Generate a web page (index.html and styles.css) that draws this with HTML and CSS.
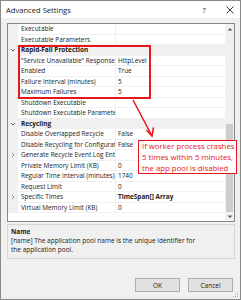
FILE: index.html
```html
<!DOCTYPE html>
<html>
<head>
<meta charset="utf-8">
<link rel="stylesheet" href="styles.css">
</head>
<body>
<div class="window">
  <div class="titlebar">
    <span class="title">Advanced Settings</span>
    <span class="help">?</span>
    <span class="close"><svg width="8" height="8" viewBox="0 0 8 8"><path d="M0.5 0.5 L7.5 7.5 M7.5 0.5 L0.5 7.5" stroke="#222" stroke-width="0.9" fill="none"/></svg></span>
  </div>
  <div class="body">
    <div class="grid">
      <div class="rows">
        <div class="row"><span class="gut"></span><span class="name">Executable</span><span class="val"></span></div>
        <div class="row"><span class="gut"></span><span class="name">Executable Parameters</span><span class="val"></span></div>
        <div class="row cat"><span class="gut"><svg class="chev" width="6" height="6" viewBox="0 0 6 6"><path d="M1 2 L3 4 L5 2" stroke="#555" stroke-width="0.9" fill="none"/></svg></span><span class="name">Rapid-Fail Protection</span></div>
        <div class="row"><span class="gut"></span><span class="name">"Service Unavailable" Response Type</span><span class="val">HttpLevel</span></div>
        <div class="row"><span class="gut"></span><span class="name">Enabled</span><span class="val">True</span></div>
        <div class="row"><span class="gut"></span><span class="name">Failure Interval (minutes)</span><span class="val">5</span></div>
        <div class="row"><span class="gut"></span><span class="name">Maximum Failures</span><span class="val">5</span></div>
        <div class="row"><span class="gut"></span><span class="name">Shutdown Executable</span><span class="val"></span></div>
        <div class="row"><span class="gut"></span><span class="name">Shutdown Executable Parameters</span><span class="val"></span></div>
        <div class="row cat"><span class="gut"><svg class="chev" width="6" height="6" viewBox="0 0 6 6"><path d="M1 2 L3 4 L5 2" stroke="#555" stroke-width="0.9" fill="none"/></svg></span><span class="name">Recycling</span></div>
        <div class="row"><span class="gut"></span><span class="name">Disable Overlapped Recycle</span><span class="val">False</span></div>
        <div class="row"><span class="gut"></span><span class="name">Disable Recycling for Configuration Changes</span><span class="val">False</span></div>
        <div class="row"><span class="gut"><svg class="chev" width="6" height="6" viewBox="0 0 6 6"><path d="M2 1 L4 3 L2 5" stroke="#888" stroke-width="0.9" fill="none"/></svg></span><span class="name">Generate Recycle Event Log Entry</span><span class="val"></span></div>
        <div class="row"><span class="gut"></span><span class="name">Private Memory Limit (KB)</span><span class="val">0</span></div>
        <div class="row"><span class="gut"></span><span class="name">Regular Time Interval (minutes)</span><span class="val">1740</span></div>
        <div class="row"><span class="gut"></span><span class="name">Request Limit</span><span class="val">0</span></div>
        <div class="row"><span class="gut"><svg class="chev" width="6" height="6" viewBox="0 0 6 6"><path d="M2 1 L4 3 L2 5" stroke="#888" stroke-width="0.9" fill="none"/></svg></span><span class="name">Specific Times</span><span class="val bold">TimeSpan[] Array</span></div>
        <div class="row"><span class="gut"></span><span class="name">Virtual Memory Limit (KB)</span><span class="val">0</span></div>
      </div>
      <div class="scrollbar">
        <span class="sb-btn"><svg width="6" height="4" viewBox="0 0 6 4"><path d="M0.5 3.5 L3 1 L5.5 3.5 Z" fill="#606060"/></svg></span>
        <span class="track"><span class="thumb"></span></span>
        <span class="sb-btn"><svg width="6" height="4" viewBox="0 0 6 4"><path d="M0.5 0.5 L3 3 L5.5 0.5 Z" fill="#606060"/></svg></span>
      </div>
    </div>
    <div class="desc">
      <div class="desc-title">Name</div>
      <div class="desc-text">[name] The application pool name is the unique identifier for the application pool.</div>
    </div>
    <div class="buttons">
      <button class="btn">OK</button>
      <button class="btn">Cancel</button>
    </div>
  </div>
  <div class="highlight"></div>
  <svg class="arrow" width="30" height="42" viewBox="0 0 30 42"><path d="M2 1 L20 35" stroke="#e8151d" stroke-width="1.5" fill="none"/><path d="M15.5 31 L21 37 L22.5 28.5" stroke="#e8151d" stroke-width="1.5" fill="none"/></svg>
  <div class="callout">If worker process crashes 5 times within 5 minutes, the app pool is disabled</div>
  <svg class="grip" width="6" height="6" viewBox="0 0 6 6"><rect x="4" y="0" width="1" height="1" fill="#aaa"/><rect x="2" y="2" width="1" height="1" fill="#aaa"/><rect x="4" y="2" width="1" height="1" fill="#aaa"/><rect x="0" y="4" width="1" height="1" fill="#aaa"/><rect x="2" y="4" width="1" height="1" fill="#aaa"/><rect x="4" y="4" width="1" height="1" fill="#aaa"/></svg>
</div>
</body>
</html>
```

FILE: styles.css
```css
* { box-sizing: border-box; }
html, body { margin: 0; padding: 0; }
body {
  width: 241px;
  height: 300px;
  overflow: hidden;
  font-family: "Open Sans", "Noto Sans", sans-serif;
  color: #1a1a1a;
}
.window {
  position: relative;
  width: 241px;
  height: 300px;
  border: 1px solid #8a8a8a;
  background: #f0f0f0;
}
.titlebar {
  height: 17px;
  background: #fff;
  display: flex;
  align-items: center;
  padding-left: 5px;
  font-size: 7.6px;
}
.title { flex: 1; }
.help {
  width: 10px;
  text-align: center;
  font-size: 7.5px;
  margin-right: 16px;
}
.close {
  width: 10px;
  display: flex;
  justify-content: center;
  margin-right: 5px;
}
.body {
  padding: 5px 5px 0 6px;
}
.grid {
  height: 199px;
  border: 1px solid #828790;
  background: #fff;
  display: flex;
}
.rows {
  flex: 1;
  overflow: hidden;
}
.row {
  display: grid;
  grid-template-columns: 10px 98px 1fr;
  height: 10.5px;
  font-size: 6.45px;
  line-height: 10px;
}
.gut {
  background: #f0f0f0;
  display: flex;
  align-items: center;
  justify-content: center;
}
.name {
  padding-left: 3px;
  white-space: nowrap;
  overflow: hidden;
  border-right: 1px solid #f0f0f0;
  border-bottom: 1px solid #f0f0f0;
}
.val {
  padding-left: 2px;
  white-space: nowrap;
  overflow: hidden;
  border-bottom: 1px solid #f0f0f0;
}
.cat {
  background: #f0f0f0;
}
.cat .name {
  font-weight: 700;
  border: none;
  grid-column: 2 / 4;
}
.bold { font-weight: 700; }
.scrollbar {
  width: 9px;
  background: #f0f0f0;
  display: flex;
  flex-direction: column;
}
.sb-btn {
  height: 9px;
  display: flex;
  align-items: center;
  justify-content: center;
}
.track {
  flex: 1;
  display: flex;
  flex-direction: column;
  justify-content: flex-end;
  padding: 0 1px;
}
.thumb {
  height: 88px;
  background: #cdcdcd;
}
.desc {
  margin-top: 2px;
  height: 35px;
  border: 1px solid #d5d5d5;
  padding: 2px 3px;
  font-size: 6.5px;
  line-height: 9px;
}
.desc-title { font-weight: 700; }
.desc-text { padding-right: 28px; }
.buttons {
  display: flex;
  justify-content: flex-end;
  gap: 8px;
  margin-top: 19px;
  padding-right: 2px;
}
.btn {
  width: 45px;
  height: 14px;
  padding: 0;
  border: 1px solid #adadad;
  background: #e1e1e1;
  font-family: inherit;
  font-size: 6.5px;
  color: #1a1a1a;
}
.highlight {
  position: absolute;
  left: 17px;
  top: 44px;
  width: 133px;
  height: 54px;
  border: 2px solid #e8151d;
}
.arrow {
  position: absolute;
  left: 130px;
  top: 98px;
}
.callout {
  position: absolute;
  left: 137px;
  top: 139px;
  width: 99px;
  height: 34px;
  border: 1px solid #e8151d;
  background: #fff;
  color: #e8151d;
  font-size: 7.8px;
  line-height: 10.8px;
  padding: 0 0 0 3px;
}
.grip {
  position: absolute;
  right: 1px;
  bottom: 1px;
}
```
